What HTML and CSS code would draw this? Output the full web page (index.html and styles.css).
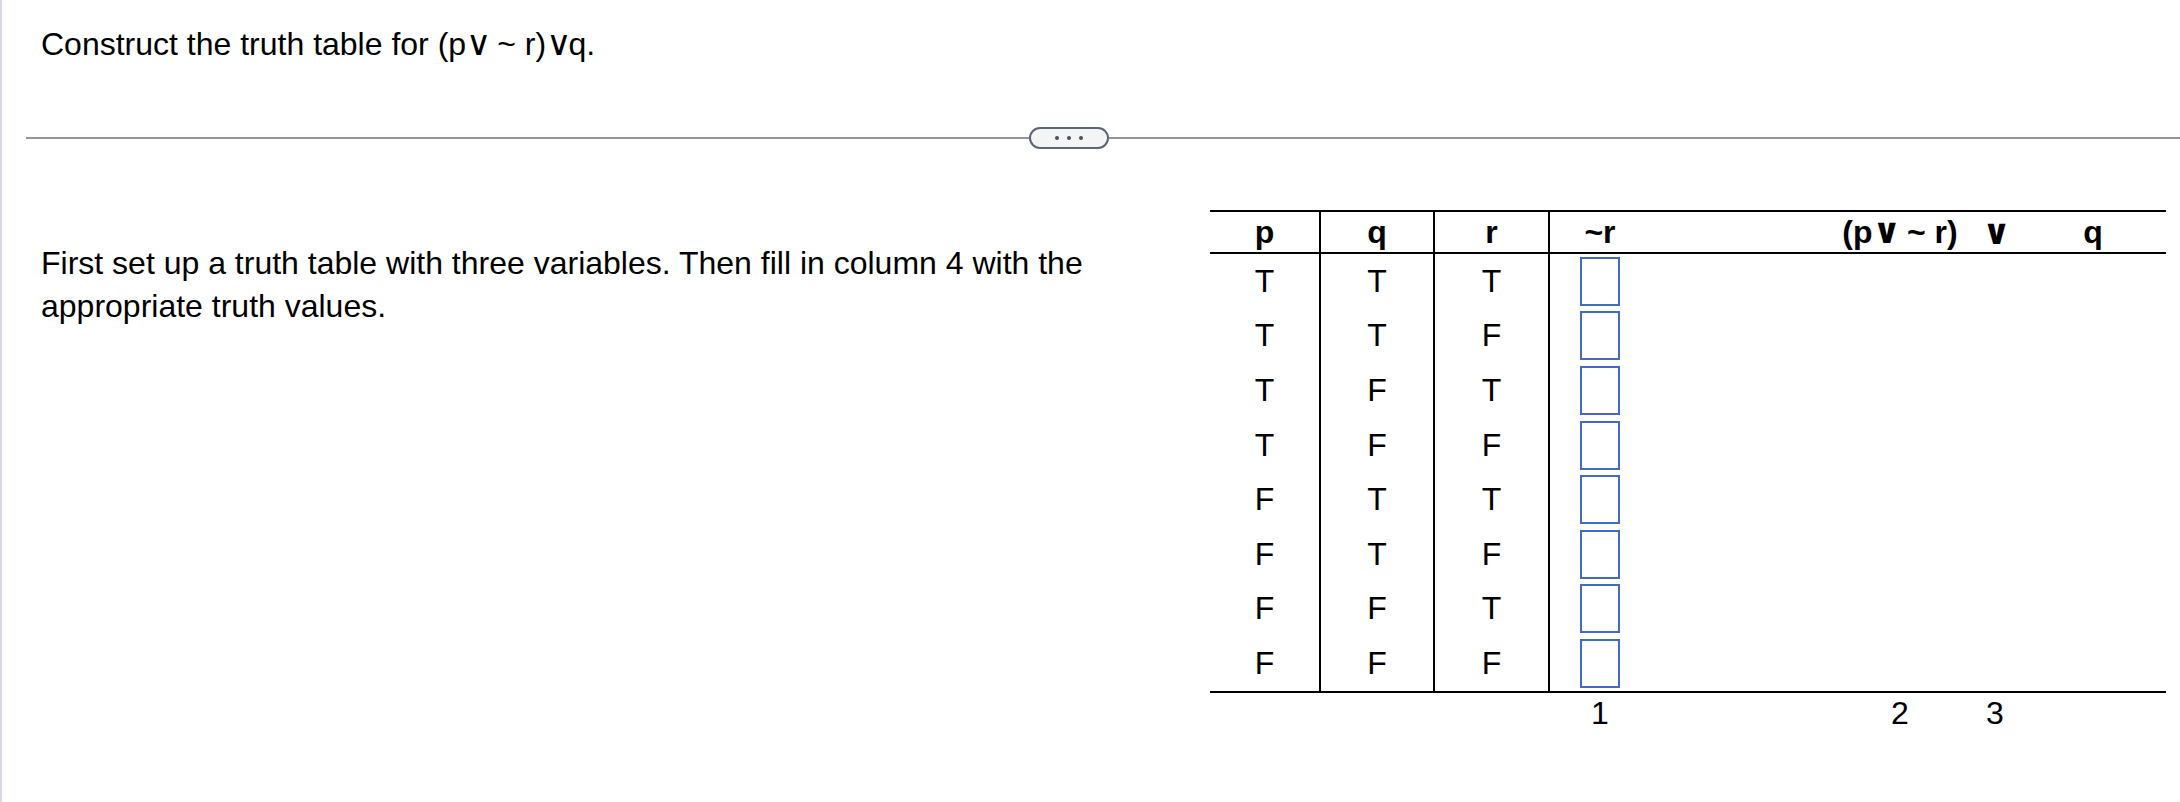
FILE: index.html
```html
<!DOCTYPE html>
<html lang="en">
<head>
<meta charset="utf-8">
<title>Truth table</title>
<link rel="stylesheet" href="styles.css">
</head>
<body>
<div class="page">
  <p class="question">Construct the truth table for (p<span class="op">∨</span> ~ r)<span class="op">∨</span>q.</p>

  <div class="divider">
    <span class="rule rule-left"></span>
    <button class="more" type="button" aria-label="Show more"><i></i><i></i><i></i></button>
    <span class="rule rule-right"></span>
  </div>

  <div class="work">
    <p class="instructions">First set up a truth table with three variables. Then fill in column 4 with the appropriate truth values.</p>

    <div class="tt">
      <div class="tt-row tt-head">
        <div class="c v">p</div>
        <div class="c v">q</div>
        <div class="c v">r</div>
        <div class="c">~r</div>
        <div class="c"></div>
        <div class="c"><span>(p<span class="op">∨</span> ~ r)</span></div>
        <div class="c"><span class="op">∨</span></div>
        <div class="c">q</div>
        <div class="c"></div>
      </div>
      <div class="tt-body">
        <div class="tt-row"><div class="c v">T</div><div class="c v">T</div><div class="c v">T</div><div class="c"><span class="box"></span></div><div class="c"></div><div class="c"></div><div class="c"></div><div class="c"></div><div class="c"></div></div>
        <div class="tt-row"><div class="c v">T</div><div class="c v">T</div><div class="c v">F</div><div class="c"><span class="box"></span></div><div class="c"></div><div class="c"></div><div class="c"></div><div class="c"></div><div class="c"></div></div>
        <div class="tt-row"><div class="c v">T</div><div class="c v">F</div><div class="c v">T</div><div class="c"><span class="box"></span></div><div class="c"></div><div class="c"></div><div class="c"></div><div class="c"></div><div class="c"></div></div>
        <div class="tt-row"><div class="c v">T</div><div class="c v">F</div><div class="c v">F</div><div class="c"><span class="box"></span></div><div class="c"></div><div class="c"></div><div class="c"></div><div class="c"></div><div class="c"></div></div>
        <div class="tt-row"><div class="c v">F</div><div class="c v">T</div><div class="c v">T</div><div class="c"><span class="box"></span></div><div class="c"></div><div class="c"></div><div class="c"></div><div class="c"></div><div class="c"></div></div>
        <div class="tt-row"><div class="c v">F</div><div class="c v">T</div><div class="c v">F</div><div class="c"><span class="box"></span></div><div class="c"></div><div class="c"></div><div class="c"></div><div class="c"></div><div class="c"></div></div>
        <div class="tt-row"><div class="c v">F</div><div class="c v">F</div><div class="c v">T</div><div class="c"><span class="box"></span></div><div class="c"></div><div class="c"></div><div class="c"></div><div class="c"></div><div class="c"></div></div>
        <div class="tt-row"><div class="c v">F</div><div class="c v">F</div><div class="c v">F</div><div class="c"><span class="box"></span></div><div class="c"></div><div class="c"></div><div class="c"></div><div class="c"></div><div class="c"></div></div>
      </div>
      <div class="tt-row tt-foot">
        <div class="c"></div>
        <div class="c"></div>
        <div class="c"></div>
        <div class="c">1</div>
        <div class="c"></div>
        <div class="c">2</div>
        <div class="c">3</div>
        <div class="c"></div>
        <div class="c"></div>
      </div>
    </div>
  </div>
</div>
</body>
</html>
```

FILE: styles.css
```css
html, body {
  margin: 0;
  padding: 0;
  background: #ffffff;
}

body {
  font-family: "Liberation Sans", Arial, sans-serif;
  font-size: 32px;
  color: #000000;
}

.page {
  min-height: 802px;
  border-left: 2px solid #d5d9e8;
  box-sizing: border-box;
}

.question {
  margin: 0;
  padding: 23px 0 0 39px;
  line-height: 43px;
}

.op {
  font-family: "DejaVu Sans", "Liberation Sans", sans-serif;
  font-size: 1.08em;
  line-height: 1;
  letter-spacing: -3px;
}

.divider {
  display: flex;
  align-items: center;
  height: 22px;
  margin-top: 61px;
  margin-left: 24px;
}

.rule {
  height: 2px;
  background: #8f96a2;
}

.rule-left {
  width: 1003px;
}

.rule-right {
  flex: 1;
}

.more {
  display: flex;
  align-items: center;
  justify-content: center;
  gap: 8px;
  width: 80px;
  height: 22px;
  padding: 0;
  border: 2px solid #5d6573;
  border-radius: 11px;
  background: #f3f4f6;
  box-sizing: border-box;
}

.more i {
  display: block;
  width: 4px;
  height: 4px;
  border-radius: 50%;
  background: #4a4f58;
}

.work {
  display: flex;
  margin-top: 61px;
}

.instructions {
  margin: 0;
  padding: 32px 0 0 39px;
  width: 1208px;
  flex: none;
  box-sizing: border-box;
  line-height: 43px;
}

.tt {
  width: 956px;
  flex: none;
}

.tt-row {
  display: grid;
  grid-template-columns: 111px 114px 115px 100px 196px 108px 82px 114px 16px;
  text-align: center;
}

.c {
  display: flex;
  align-items: center;
  justify-content: center;
  white-space: nowrap;
}

.c.v {
  border-right: 2px solid #000000;
}

.tt-head {
  border-top: 2px solid #000000;
  border-bottom: 2px solid #000000;
  font-weight: bold;
  height: 44px;
  box-sizing: border-box;
  line-height: 40px;
}

.tt-head .op {
  font-size: 1.1em;
}

.tt-body {
  border-bottom: 2px solid #000000;
}

.tt-body .tt-row {
  height: 54.6px;
}

.box {
  display: block;
  width: 40px;
  height: 49px;
  border: 2px solid #416bc6;
  box-sizing: border-box;
  background: #ffffff;
}

.tt-foot {
  height: 40px;
  line-height: 40px;
}
```
